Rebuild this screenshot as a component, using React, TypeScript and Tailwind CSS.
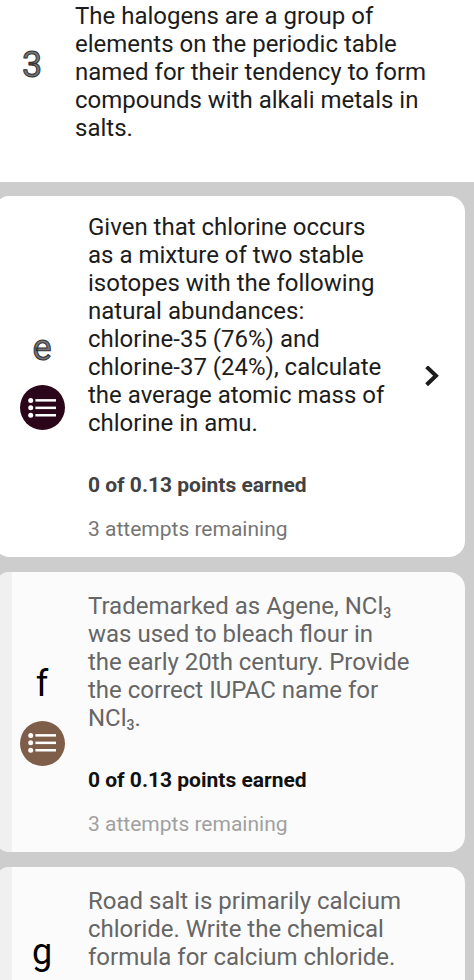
import type { ReactNode } from 'react';

function ListIcon() {
  return (
    <svg viewBox="0 0 28 22" className="w-7 h-[22px]" fill="#ffffff" aria-hidden="true">
      <circle cx="2.7" cy="3.4" r="2.5" />
      <circle cx="2.7" cy="10.8" r="2.5" />
      <circle cx="2.7" cy="18.2" r="2.5" />
      <rect x="7.4" y="2.1" width="20.6" height="2.5" />
      <rect x="7.4" y="9.6" width="20.6" height="2.5" />
      <rect x="7.4" y="17" width="20.6" height="2.5" />
    </svg>
  );
}

function Lines({ lines, className }: { lines: ReactNode[]; className: string }) {
  return (
    <p className={`text-2xl leading-7 whitespace-nowrap ${className}`}>
      {lines.map((line, i) => (
        <span key={i} className="block">
          {line}
        </span>
      ))}
    </p>
  );
}

function NCl3() {
  return (
    <>
      NCl<sub className="text-sm leading-none font-medium bottom-[-4px]">3</sub>
    </>
  );
}

type CardProps = {
  letter: string;
  lines: ReactNode[];
  active?: boolean;
  score?: boolean;
};

function QuestionCard({ letter, lines, active = false, score = true }: CardProps) {
  return (
    <section
      className={`flex -ml-1.5 mr-[9px] rounded-2xl overflow-hidden ${
        active ? 'bg-white' : 'bg-[#fbfbfb]'
      }`}
    >
      <div className={`w-[18px] shrink-0 ${active ? 'bg-white' : 'bg-[#f0f0f0]'}`}></div>
      <div className="flex flex-col items-center justify-center w-[60px] shrink-0">
        <span
          className={`text-4xl leading-[50px] ${
            active ? 'text-[#757575] [-webkit-text-stroke:1px_#333333]' : 'text-black'
          }`}
        >
          {letter}
        </span>
        <button
          type="button"
          aria-label={`Options for part ${letter}`}
          className={`flex items-center justify-center w-[45px] h-[45px] mt-3 rounded-full ${
            active ? 'bg-[#2b0519]' : 'bg-[#7e5d49]'
          }`}
        >
          <ListIcon />
        </button>
      </div>
      <div className={`flex-1 min-w-0 pl-4 pb-3.5 ${active ? 'pt-[17px]' : 'pt-5'} ${score ? '' : 'min-h-[226px]'}`}>
        <Lines lines={lines} className={active ? 'text-[#1c1c1c]' : 'text-[#666666]'} />
        {score && (
          <>
            <p
              className={`mt-[34px] text-[21px] leading-7 font-bold ${
                active ? 'text-[#424242]' : 'text-[#111111]'
              }`}
            >
              0 of 0.13 points earned
            </p>
            <p className={`mt-4 text-[21px] leading-7 ${active ? 'text-[#757575]' : 'text-[#a0a0a0]'}`}>
              3 attempts remaining
            </p>
          </>
        )}
      </div>
      {active && (
        <button type="button" aria-label="Open question" className="shrink-0 self-center mr-[26px]">
          <svg viewBox="0 0 14 22" className="w-3.5 h-[22px]" fill="none" stroke="#1c1c1c" strokeWidth="4">
            <path d="M1.6 0.8 L11 9.8 L1.6 18.8" />
          </svg>
        </button>
      )}
    </section>
  );
}

function App() {
  return (
    <div className="h-screen overflow-hidden bg-[#cdcdcd] font-['Roboto',sans-serif]">
      <header className="flex bg-white pt-0.5 pb-10">
        <span className="w-[75px] shrink-0 pl-[22px] pt-[38px] text-4xl leading-[50px] text-[#757575] [-webkit-text-stroke:1px_#333333]">
          3
        </span>
        <Lines
          className="text-[#1c1c1c]"
          lines={[
            'The halogens are a group of',
            'elements on the periodic table',
            'named for their tendency to form',
            'compounds with alkali metals in',
            'salts.',
          ]}
        />
      </header>

      <main className="flex flex-col gap-[15px] pt-3.5">
        <QuestionCard
          active
          letter="e"
          lines={[
            'Given that chlorine occurs',
            'as a mixture of two stable',
            'isotopes with the following',
            'natural abundances:',
            'chlorine-35 (76%) and',
            'chlorine-37 (24%), calculate',
            'the average atomic mass of',
            'chlorine in amu.',
          ]}
        />
        <QuestionCard
          letter="f"
          lines={[
            <>Trademarked as Agene, <NCl3 /></>,
            'was used to bleach flour in',
            'the early 20th century. Provide',
            'the correct IUPAC name for',
            <><NCl3 />.</>,
          ]}
        />
        <QuestionCard
          letter="g"
          score={false}
          lines={[
            'Road salt is primarily calcium',
            'chloride. Write the chemical',
            'formula for calcium chloride.',
          ]}
        />
      </main>
    </div>
  );
}

export default App;
